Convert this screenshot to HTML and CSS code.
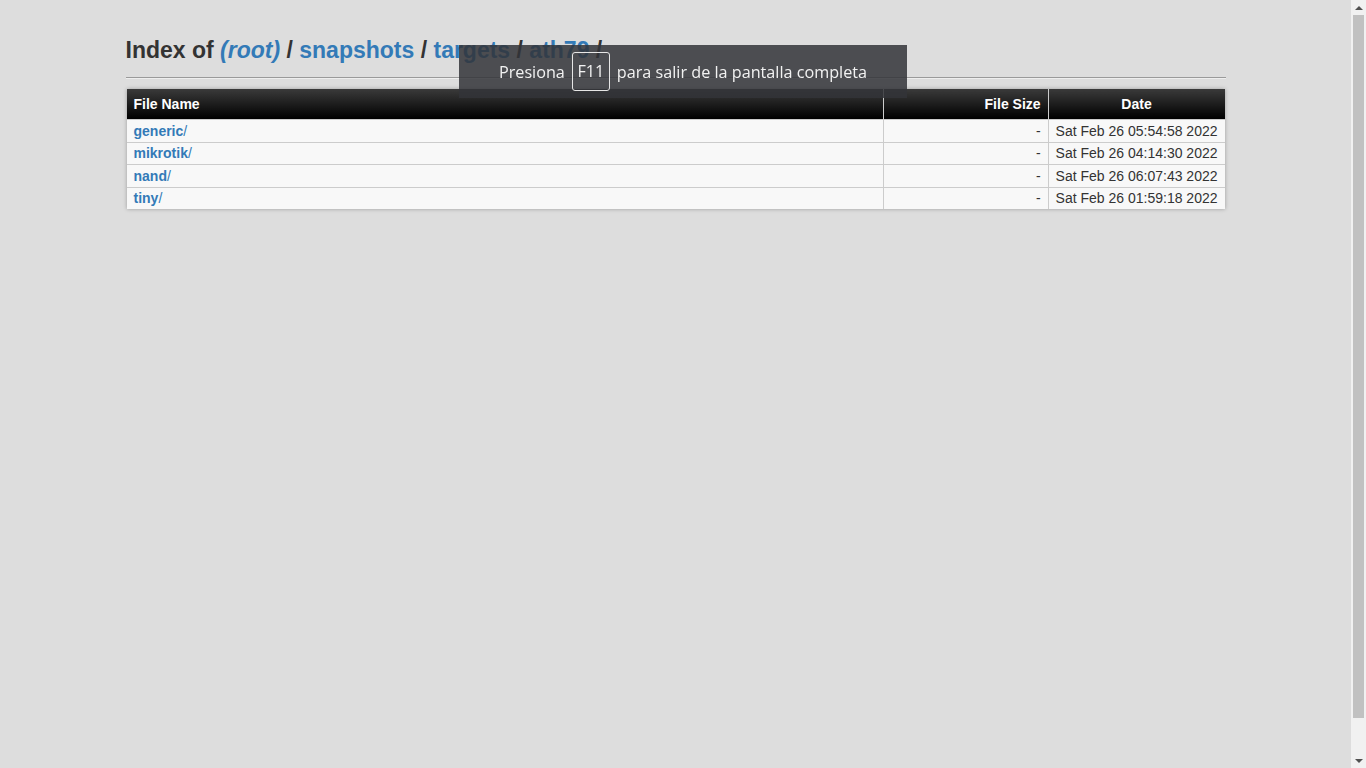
FILE: index.html
```html
<!DOCTYPE html>
<html lang="es">
<head>
<meta charset="utf-8">
<title>Index of /snapshots/targets/ath79/</title>
<link rel="stylesheet" href="styles.css">
</head>
<body>
<div class="content">
  <h1 class="title">Index of <a class="crumb root" href="#">(root)</a> / <a class="crumb" href="#">snapshots</a> / <a class="crumb" href="#">targets</a> / <a class="crumb" href="#">ath79</a> /</h1>
  <hr class="rule">
  <table class="listing">
    <thead>
      <tr>
        <th class="col-name">File Name</th>
        <th class="col-size">File Size</th>
        <th class="col-date">Date</th>
      </tr>
    </thead>
    <tbody>
      <tr>
        <td class="col-name"><a class="entry" href="#">generic</a><span class="sep">/</span></td>
        <td class="col-size">-</td>
        <td class="col-date">Sat Feb 26 05:54:58 2022</td>
      </tr>
      <tr>
        <td class="col-name"><a class="entry" href="#">mikrotik</a><span class="sep">/</span></td>
        <td class="col-size">-</td>
        <td class="col-date">Sat Feb 26 04:14:30 2022</td>
      </tr>
      <tr>
        <td class="col-name"><a class="entry" href="#">nand</a><span class="sep">/</span></td>
        <td class="col-size">-</td>
        <td class="col-date">Sat Feb 26 06:07:43 2022</td>
      </tr>
      <tr>
        <td class="col-name"><a class="entry" href="#">tiny</a><span class="sep">/</span></td>
        <td class="col-size">-</td>
        <td class="col-date">Sat Feb 26 01:59:18 2022</td>
      </tr>
    </tbody>
  </table>
</div>

<div class="fs-bubble">
  <span class="fs-text">Presiona</span>
  <span class="fs-key">F11</span>
  <span class="fs-text">para salir de la pantalla completa</span>
</div>

<div class="scrollbar">
  <div class="sb-btn"><span class="sb-arrow up"></span></div>
  <div class="sb-track"><div class="sb-thumb"></div></div>
  <div class="sb-btn"><span class="sb-arrow down"></span></div>
</div>
</body>
</html>
```

FILE: styles.css
```css
html, body {
  height: 100%;
}

body {
  box-sizing: border-box;
  margin: 0 15px 0 0;
  padding: 39px 0 0 0;
  background: #dddddd;
  color: #333333;
  font-family: "Liberation Sans", Arial, sans-serif;
  font-size: 14px;
  overflow: hidden;
}

.content {
  max-width: 1100px;
  margin: 0 auto;
}

.title {
  margin: 0 0 15px 0;
  font-size: 23px;
  line-height: 23px;
  font-weight: bold;
  color: #333333;
}

.crumb {
  color: #337ab7;
  text-decoration: none;
}

.crumb.root {
  font-style: italic;
}

.rule {
  margin: 0 0 10px 0;
  border: 0;
  border-top: 1px solid #9a9a9a;
  border-bottom: 1px solid #eeeeee;
  height: 0;
}

.listing {
  width: calc(100% - 2px);
  margin: 0 1px;
  border-collapse: collapse;
  box-shadow: 0 0 4px rgba(0, 0, 0, 0.3);
  background: #f8f8f8;
}

.listing th {
  background: linear-gradient(#3a3a3a, #000000);
  color: #ffffff;
  font-weight: bold;
  line-height: 16px;
  padding: 7px 7px;
  border-left: 1px solid #cccccc;
  white-space: nowrap;
}

.listing th:first-child {
  border-left: 0;
}

.listing td {
  line-height: 16px;
  padding: 2.75px 7px;
  border-top: 1px solid #cccccc;
  border-left: 1px solid #cccccc;
  white-space: nowrap;
}

.listing td:first-child {
  border-left: 0;
}

.col-name {
  text-align: left;
}

.col-size {
  text-align: right;
  width: 15%;
}

.col-date {
  text-align: right;
  width: 1%;
}

.listing th.col-date {
  text-align: center;
}

.entry {
  color: #337ab7;
  font-weight: bold;
  text-decoration: none;
}

.sep {
  color: #337ab7;
}

.fs-bubble {
  position: fixed;
  top: 45px;
  left: 459px;
  width: 448px;
  height: 53px;
  box-sizing: border-box;
  display: flex;
  align-items: center;
  justify-content: center;
  gap: 7px;
  background: rgba(50, 52, 56, 0.85);
  color: #f2f2f2;
  font-family: "Open Sans", "Noto Sans", sans-serif;
  font-size: 16.2px;
}

.fs-key {
  display: flex;
  align-items: center;
  justify-content: center;
  width: 38px;
  height: 39px;
  box-sizing: border-box;
  border: 1px solid #e6e6e6;
  border-radius: 3px;
  margin-bottom: 1px;
}

.scrollbar {
  position: fixed;
  top: 0;
  right: 0;
  width: 15px;
  height: 100%;
  background: #f1f1f1;
  display: flex;
  flex-direction: column;
}

.sb-btn {
  height: 15px;
  display: flex;
  align-items: center;
  justify-content: center;
}

.sb-arrow {
  width: 0;
  height: 0;
  border-left: 4px solid transparent;
  border-right: 4px solid transparent;
}

.sb-arrow.up {
  border-bottom: 4px solid #505050;
}

.sb-arrow.down {
  border-top: 4px solid #505050;
}

.sb-track {
  flex: 1;
  padding: 0 2px 35px 2px;
}

.sb-thumb {
  height: 703px;
  background: #c1c1c1;
}
```
